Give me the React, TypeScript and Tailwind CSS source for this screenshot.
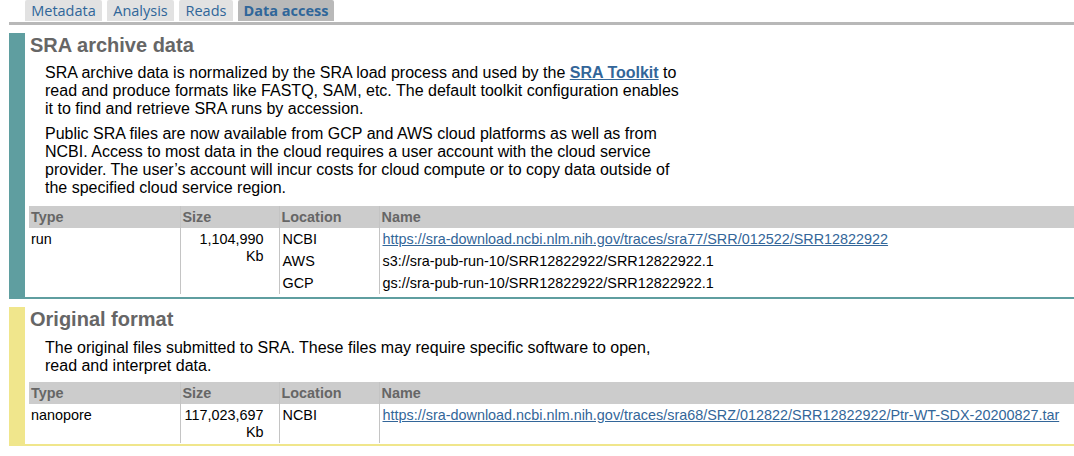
import React from "react";

const tabs = [
  { label: "Metadata", w: "w-[77px]", active: false },
  { label: "Analysis", w: "w-[67px]", active: false },
  { label: "Reads", w: "w-[54px]", active: false },
  { label: "Data access", w: "w-[96px]", active: true },
];

function Th({ children, first }: { children: React.ReactNode; first?: boolean }) {
  return (
    <th
      className={
        "text-left font-bold text-[#666] text-[14.4px] leading-[16px] py-[3px] px-[2px] align-top h-[22px] " +
        (first ? "" : "border-l border-[#c4c4c4]")
      }
    >
      {children}
    </th>
  );
}

function Section({
  color,
  title,
  children,
}: {
  color: "teal" | "khaki";
  title: string;
  children: React.ReactNode;
}) {
  const bar = color === "teal" ? "bg-[#5f9ea0]" : "bg-[#f0e68c]";
  const bottom = color === "teal" ? "border-[#5f9ea0]" : "border-[#f0e68c]";
  const pb = color === "teal" ? "pb-[3px]" : "pb-[1px]";
  return (
    <div className={"flex border-b-2 " + bottom}>
      <div className={"w-[16px] shrink-0 " + bar} />
      <div className={"flex-1 pl-[4px] " + pb}>
        <h2 className="text-[20px] leading-[24px] font-bold text-[#666] pl-[1px]">{title}</h2>
        {children}
      </div>
    </div>
  );
}

const linkCls = "text-[#336699] underline";

export default function App() {
  return (
    <div
      className="w-[1074px] h-[456px] overflow-hidden bg-white pl-[9px] text-black"
      style={{ fontFamily: '"Liberation Sans", Arial, sans-serif' }}
    >
      {/* Tabs */}
      <div className="flex gap-[5px] pl-[16px]" style={{ fontFamily: '"Open Sans", "DejaVu Sans", sans-serif' }}>
        {tabs.map((t) => (
          <div
            key={t.label}
            className={
              t.w +
              " h-[21px] flex items-center justify-center text-[14.5px] leading-[21px] text-[#2f6699] rounded-t-[2px] " +
              (t.active ? "bg-[#b9b9b9] font-bold" : "bg-[#e2e2e2]")
            }
          >
            {t.label}
          </div>
        ))}
      </div>
      <div className="h-[3px] mt-[1px] bg-[#b8b8b8]" />

      <div className="mt-[8px]">
        <Section color="teal" title="SRA archive data">
          <p className="ml-[16px] max-w-[640px] mt-[7px] text-[16px] leading-[18px]">
            SRA archive data is normalized by the SRA load process and used by the{" "}
            <a href="#" className={linkCls + " font-bold"}>
              SRA Toolkit
            </a>{" "}
            to read and produce formats like FASTQ, SAM, etc. The default toolkit configuration enables it to find and
            retrieve SRA runs by accession.
          </p>
          <p className="ml-[16px] max-w-[640px] mt-[7px] text-[16px] leading-[18px]">
            Public SRA files are now available from GCP and AWS cloud platforms as well as from NCBI. Access to most data
            in the cloud requires a user account with the cloud service provider. The user’s account will incur costs for
            cloud compute or to copy data outside of the specified cloud service region.
          </p>
          <table className="w-full mt-[9px] border-collapse table-fixed text-[14.4px]">
            <colgroup>
              <col className="w-[151px]" />
              <col className="w-[99px]" />
              <col className="w-[100px]" />
              <col />
            </colgroup>
            <thead>
              <tr className="bg-[#cccccc]">
                <Th first>Type</Th>
                <Th>Size</Th>
                <Th>Location</Th>
                <Th>Name</Th>
              </tr>
            </thead>
            <tbody className="leading-[16px]">
              <tr>
                <td rowSpan={3} className="align-top py-[3px] px-[2px]">
                  run
                </td>
                <td
                  rowSpan={3}
                  className="align-top pt-[3px] pr-[15px] text-right leading-[17px] border-l border-[#c4c4c4]"
                >
                  <div>1,104,990</div>
                  <div>Kb</div>
                </td>
                <td className="py-[3px] px-[3px] border-l border-[#c4c4c4]">NCBI</td>
                <td className="py-[3px] px-[3px] border-l border-[#c4c4c4] whitespace-nowrap">
                  <a href="#" className={linkCls}>
                    https://sra-download.ncbi.nlm.nih.gov/traces/sra77/SRR/012522/SRR12822922
                  </a>
                </td>
              </tr>
              <tr>
                <td className="py-[3px] px-[3px] border-l border-[#c4c4c4]">AWS</td>
                <td className="py-[3px] px-[3px] border-l border-[#c4c4c4] whitespace-nowrap">
                  s3://sra-pub-run-10/SRR12822922/SRR12822922.1
                </td>
              </tr>
              <tr>
                <td className="py-[3px] px-[3px] border-l border-[#c4c4c4]">GCP</td>
                <td className="py-[3px] px-[3px] border-l border-[#c4c4c4] whitespace-nowrap">
                  gs://sra-pub-run-10/SRR12822922/SRR12822922.1
                </td>
              </tr>
            </tbody>
          </table>
        </Section>
      </div>

      <div className="mt-[8px]">
        <Section color="khaki" title="Original format">
          <p className="ml-[16px] max-w-[640px] mt-[8px] text-[16px] leading-[18px]">
            The original files submitted to SRA. These files may require specific software to open, read and interpret
            data.
          </p>
          <table className="w-full mt-[7px] border-collapse table-fixed text-[14.4px]">
            <colgroup>
              <col className="w-[151px]" />
              <col className="w-[99px]" />
              <col className="w-[100px]" />
              <col />
            </colgroup>
            <thead>
              <tr className="bg-[#cccccc]">
                <Th first>Type</Th>
                <Th>Size</Th>
                <Th>Location</Th>
                <Th>Name</Th>
              </tr>
            </thead>
            <tbody className="leading-[16px]">
              <tr>
                <td className="align-top pt-[3px] pb-[3px] px-[2px]">nanopore</td>
                <td className="align-top pt-[3px] pb-[2px] pr-[15px] text-right leading-[17px] border-l border-[#c4c4c4]">
                  <div>117,023,697</div>
                  <div>Kb</div>
                </td>
                <td className="align-top py-[3px] px-[3px] border-l border-[#c4c4c4]">NCBI</td>
                <td className="align-top py-[3px] px-[3px] border-l border-[#c4c4c4] whitespace-nowrap">
                  <a href="#" className={linkCls}>
                    https://sra-download.ncbi.nlm.nih.gov/traces/sra68/SRZ/012822/SRR12822922/Ptr-WT-SDX-20200827.tar
                  </a>
                </td>
              </tr>
            </tbody>
          </table>
        </Section>
      </div>
    </div>
  );
}
